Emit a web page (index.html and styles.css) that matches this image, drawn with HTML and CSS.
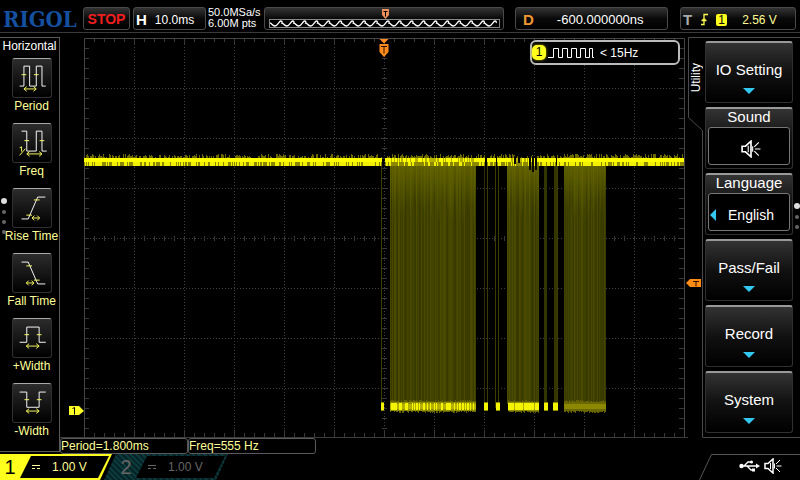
FILE: index.html
```html
<!DOCTYPE html>
<html lang="en">
<head>
    <meta charset="UTF-8">
    <meta name="viewport" content="width=device-width, initial-scale=1.0">
    <title>RIGOL Oscilloscope</title>
    <link rel="stylesheet" href="styles.css">
</head>
<body>
    <!-- Shared icons -->
    <svg class="defs" width="0" height="0" aria-hidden="true">
        <symbol id="icon-speaker" viewBox="0 0 18 16">
            <path d="M1 5.500h3l5-4.500v14l-5-4.500h-3z" fill="none" stroke="#fff" stroke-width="1.500"/>
            <path d="M6.500 5v6" fill="none" stroke="#fff"/>
            <path d="M10.500 5.500v5M12 6l4-4M12.500 8h5M12 10l4 4" fill="none" stroke="#fff"/>
        </symbol>
    </svg>

    <div class="scope">
        <header class="topbar">
            <div class="logo">RIGOL</div>
            <button class="box stop">STOP</button>
            <div class="box timebase"><b>H</b><span>10.0ms</span></div>
            <div class="sampling">50.0MSa/s<br>6.00M pts</div>
            <div class="box memory">
                <svg viewBox="0 0 240 21" preserveAspectRatio="none">
                    <rect x="4.500" y="11.500" width="232" height="8" fill="#000" stroke="#888"/>
                    <path id="memory-wave" fill="none" stroke="#fff" stroke-width="1.300"/>
                    <path d="M118 1h7v6l-3.500 4-3.500-4z" fill="#f0915a"/>
                    <path d="M119.500 3.500h4M121.500 3.500v5" stroke="#000"/>
                </svg>
            </div>
            <div class="box delay"><b>D</b><span>-600.000000ns</span></div>
            <div class="box trigger">
                <b>T</b>
                <svg width="9" height="13" viewBox="0 0 9 13">
                    <path d="M1 11.500h3v-10h4M1.500 7.500h5M2.500 6.500h3" fill="none" stroke="#ffff50" stroke-width="1.300"/>
                </svg>
                <span class="source">1</span>
                <span class="level">2.56 V</span>
            </div>
        </header>

        <main class="screen">
            <nav class="measures">
                <h2>Horizontal</h2>
                <button class="measure">
                    <svg viewBox="0 0 40 40">
                        <path class="w" d="M7 28.500h4.500v-21h6v21h7v-21h6v21h4"/>
                        <path class="y" d="M9 16.500h5M22 16.500h5M12 31.500h12M14.500 29l-3 2.500 3 2.500M21.500 29l3 2.500-3 2.500"/>
                    </svg>
                    Period
                </button>
                <button class="measure">
                    <svg viewBox="0 0 40 40">
                        <path class="w" d="M9 7.500h5.500v21h10v-21h6v21h5"/>
                        <path class="y" d="M12 17.500h5M28 17.500h5M15 31.500h15M17.500 29l-3 2.500 3 2.500M27.500 29l3 2.500-3 2.500M7 25l2-1v5M7 33l6-7"/>
                    </svg>
                    Freq
                </button>
                <button class="measure">
                    <svg viewBox="0 0 40 40">
                        <path class="w" d="M9 31.500h7l10-23h8"/>
                        <path class="y" d="M14 27.500h6M22 11.500h6M20 30.500h8M22.500 28l-2.500 2.500 2.500 2.500M25.500 28l2.500 2.500-2.500 2.500"/>
                    </svg>
                    Rise Time
                </button>
                <button class="measure">
                    <svg viewBox="0 0 40 40">
                        <path class="w" d="M9 8.500h7l10 23h8"/>
                        <path class="y" d="M14 12.500h6M22 27.500h6M14 30.500h8M16.500 28l-2.500 2.500 2.500 2.500M19.500 28l2.500 2.500-2.500 2.500"/>
                    </svg>
                    Fall Time
                </button>
                <button class="measure">
                    <svg viewBox="0 0 40 40">
                        <path class="w" d="M7 24.500h7.500v-16h13v16h7"/>
                        <path class="y" d="M12 16.500h5M25 16.500h5M14 28.500h13M17 26l-3 2.500 3 2.500M24.500 26l3 2.500-3 2.500"/>
                    </svg>
                    +Width
                </button>
                <button class="measure">
                    <svg viewBox="0 0 40 40">
                        <path class="w" d="M7 8.500h7.500v16h13v-16h7"/>
                        <path class="y" d="M12 16.500h5M25 16.500h5M14 28.500h13M17 26l-3 2.500 3 2.500M24.500 26l3 2.500-3 2.500"/>
                    </svg>
                    -Width
                </button>
                <div class="dots dots-left"><i></i><i></i><i></i><i></i></div>
            </nav>

            <section class="display">
                <svg class="plot" viewBox="60 37 628 401">
                    <defs>
                        <linearGradient id="glow" x1="0" y1="0" x2="0" y2="1">
                            <stop offset="0" stop-color="#808000" stop-opacity=".5"/>
                            <stop offset="1" stop-color="#808000" stop-opacity="0"/>
                        </linearGradient>
                    </defs>
                    <g id="grid"></g>
                    <g id="trace" shape-rendering="crispEdges"></g>
                    <!-- trigger position -->
                    <path d="M379.500 39h9l-4.500 4.500zM379.500 44h9v8l-4.500 5-4.500-5z" fill="#ff8c1e"/>
                    <path d="M381 46.500h6M384 46.500v7" stroke="#301000"/>
                    <!-- channel 1 ground -->
                    <path d="M69 406h10l5 5-5 4h-10z" fill="#ffff28"/>
                    <path d="M72.500 408.500l2-1v7" fill="none" stroke="#000"/>
                </svg>
                <div class="counter">
                    <b>1</b>
                    <svg width="46" height="12" viewBox="0 0 46 12">
                        <path d="M0 10.500h5.500v-9h5v9h4v-9h5v9h4v-9h5v9h4v-9h5v9h4v-9h3v9h1.500" fill="none" stroke="#fff"/>
                    </svg>
                    <span>&lt; 15Hz</span>
                </div>
                <div class="results">
                    <div>Period=1.800ms</div>
                    <div>Freq=555 Hz</div>
                </div>
            </section>

            <aside class="side">
                <div class="tab">
                    <svg width="15" height="401" viewBox="0 0 15 401">
                        <path d="M15 .5H.5v80l14 13v307" fill="none" stroke="#4a4a4a"/>
                        <path d="M-2 246l4-4h11v8h-11z" fill="#ff8c14"/>
                        <path d="M5 244.500h6M8 244.500v5" stroke="#301000"/>
                    </svg>
                    <span>Utility</span>
                </div>
                <div class="menu">
                    <button class="item">IO Setting<i class="down"></i></button>
                    <button class="item choice">Sound
                        <span><svg width="20" height="18"><use href="#icon-speaker"/></svg></span>
                    </button>
                    <button class="item choice">Language
                        <span><i class="left"></i>English</span>
                    </button>
                    <button class="item">Pass/Fail<i class="down"></i></button>
                    <button class="item">Record<i class="down"></i></button>
                    <button class="item">System<i class="down"></i></button>
                    <div class="dots dots-right"><i></i><i></i><i></i></div>
                </div>
            </aside>
        </main>

        <footer class="bottombar">
            <button class="channel ch1">
                <b>1</b>
                <span><i class="dc"></i>1.00 V</span>
            </button>
            <button class="channel ch2">
                <b>2</b>
                <span><i class="dc"></i>1.00 V</span>
            </button>
            <div class="status">
                <svg class="edge" width="14" height="26" viewBox="0 0 14 26">
                    <path d="M.5 26l12-25.500h2" fill="none" stroke="#555"/>
                </svg>
                <div class="status-icons">
                    <svg width="21" height="12" viewBox="0 0 21 12">
                        <path d="M2 6h16M5 6l4-4h3M8 6l4 4h3" fill="none" stroke="#fff" stroke-width="1.300"/>
                        <circle cx="2.500" cy="6" r="2.200" fill="#fff"/>
                        <circle cx="12.500" cy="2" r="1.500" fill="#fff"/>
                        <path d="M17 3.500l4 2.500-4 2.500zM13 8.500h3v3h-3z" fill="#fff"/>
                    </svg>
                    <svg width="18" height="16"><use href="#icon-speaker"/></svg>
                </div>
            </div>
        </footer>
    </div>

    <script src="scope.js"></script>
</body>
</html>
```
FILE: styles.css
```css
* {
    box-sizing: border-box;
}

body {
    margin: 0;
    background: #000;
    color: #fff;
    font-family: "Liberation Sans", Arial, sans-serif;
    font-size: 12px;
}

button {
    margin: 0;
    padding: 0;
    border: none;
    background: none;
    color: inherit;
    font: inherit;
    cursor: pointer;
}

svg {
    display: block;
}

.defs {
    position: absolute;
}

.scope {
    display: flex;
    flex-direction: column;
    min-height: 100vh;
    overflow: hidden;
}

/* Top bar */
.topbar {
    display: flex;
    align-items: flex-start;
    height: 33px;
    padding: 7px 4px 0 3px;
    border-bottom: 1px solid #3a3a3a;
}

.logo {
    width: 80px;
    color: #1550a0;
    font-family: "DejaVu Serif Condensed", "DejaVu Serif", serif;
    font-size: 22px;
    font-weight: bold;
    line-height: 24px;
}

.box {
    display: flex;
    align-items: center;
    height: 23px;
    border: 1px solid #4a4a4a;
    border-radius: 3px;
    background: linear-gradient(#333, #0a0a0a 50%, #000);
}

.box b {
    font-size: 15px;
}

.stop {
    justify-content: center;
    width: 47px;
    color: #f01e1e;
    font-size: 14px;
    font-weight: bold;
}

.timebase,
.delay,
.trigger {
    padding-top: 2px;
}

.timebase {
    width: 73px;
    margin-left: 3px;
    padding-left: 2px;
    gap: 8px;
}

.sampling {
    width: 56px;
    margin-left: 2px;
    font-size: 11px;
    line-height: 11px;
    white-space: nowrap;
}

.memory {
    flex: 1;
}

.memory svg {
    width: 100%;
    height: 21px;
}

.delay {
    width: 153px;
    margin-left: 11px;
    padding-left: 7px;
    gap: 23px;
    font-size: 13px;
}

.delay b {
    color: #f09632;
}

.trigger {
    width: 116px;
    margin-left: 12px;
    padding-left: 2px;
    color: #ffff96;
}

.trigger b {
    color: #aaa;
    margin-right: 8px;
}

.source {
    width: 11px;
    margin-left: 7px;
    border-radius: 2px;
    background: #ffff1e;
    color: #000;
    line-height: 12px;
    text-align: center;
}

.level {
    margin-left: 15px;
}

/* Main screen */
.screen {
    display: grid;
    grid-template-columns: 60px 1fr 112px;
    align-items: start;
    padding-top: 4px;
}

.measures {
    position: relative;
    display: flex;
    flex-direction: column;
    align-items: center;
    gap: 9px;
    padding: 0 0 12px;
    border: solid #5a5a5a;
    border-width: 1px 1px 1px 0;
}

.measures h2 {
    margin: 0 0 -5px;
    font-size: 12px;
    font-weight: normal;
    line-height: 16px;
}

.measure {
    display: flex;
    flex-direction: column;
    align-items: center;
    padding-left: 4px;
    color: #ffff96;
    line-height: 16px;
    white-space: nowrap;
}

.measure svg {
    width: 40px;
    height: 40px;
    border: 1px solid #303030;
    border-top-color: #aaa;
    border-radius: 3px;
    background: linear-gradient(#2c2c2c, #000);
}

.measure path {
    fill: none;
}

.w {
    stroke: #fff;
}

.y {
    stroke: #ffff64;
}

.dots {
    position: absolute;
    display: flex;
    flex-direction: column;
    align-items: center;
    gap: 6px;
}

.dots i {
    width: 4px;
    height: 4px;
    border-radius: 50%;
    background: #666;
}

.dots i:first-child {
    width: 6px;
    height: 6px;
    background: #ddd;
}

.dots-left {
    left: 1px;
    top: 160px;
}

.dots-right {
    right: 0;
    top: 165px;
}

.display {
    position: relative;
}

.plot {
    width: 100%;
}

.counter {
    position: absolute;
    top: 3px;
    right: 8px;
    display: flex;
    align-items: center;
    width: 150px;
    height: 25px;
    border: 2px solid #bbb;
    border-radius: 6px;
    background: #000;
}

.counter b {
    width: 14px;
    border-radius: 5px;
    background: #ffff1e;
    box-shadow: 0 0 3px #aaaa00;
    color: #000;
    font-weight: normal;
    line-height: 15px;
    text-align: center;
}

.counter svg {
    margin-left: 2px;
}

.counter span {
    margin-left: 6px;
}

.results {
    display: flex;
    color: #ffff96;
}

.results div {
    width: 128px;
    border: 1px solid #5a5a5a;
    border-radius: 3px;
    line-height: 14px;
}

/* Utility menu */
.side {
    display: flex;
}

.tab {
    position: relative;
    width: 15px;
}

.tab svg {
    overflow: visible;
}

.tab span {
    position: absolute;
    top: 26px;
    left: 1px;
    line-height: 15px;
    writing-mode: vertical-rl;
    transform: rotate(180deg);
}

.menu {
    position: relative;
    flex: 1;
    display: flex;
    flex-direction: column;
    gap: 4px;
    padding: 3px 7px 4px 2px;
    border: solid #4a4a4a;
    border-width: 1px 0;
}

.item {
    display: flex;
    flex-direction: column;
    align-items: center;
    height: 62px;
    padding-top: 18px;
    border: 1px solid #303030;
    border-top: 2px solid #999;
    border-radius: 3px;
    background: linear-gradient(#333, #111 50%, #000);
    font-size: 15px;
    line-height: 18px;
}

.down {
    margin-top: 9px;
    border: solid transparent;
    border-width: 6px 6px 0;
    border-top-color: #32c8f0;
}

.choice {
    padding: 0 2px 3px;
    line-height: 16px;
}

.choice > span {
    position: relative;
    display: flex;
    flex: 1;
    align-items: center;
    justify-content: center;
    width: 100%;
    margin-top: 2px;
    padding: 5px 0 0 4px;
    border: 1px solid #777;
    border-radius: 3px;
    background: #000;
    font-size: 14px;
}

.left {
    position: absolute;
    left: 1px;
    border: solid transparent;
    border-width: 6px 6px 6px 0;
    border-right-color: #32c8f0;
}

/* Channels and status */
.bottombar {
    display: flex;
    flex: 1;
    min-height: 26px;
}

.channel {
    display: flex;
    align-items: stretch;
    width: 112px;
    padding: 2px 3px 2px 0;
    clip-path: polygon(0 0, 100% 0, calc(100% - 12px) 100%, 0 100%);
}

.channel b {
    width: 20px;
    font-size: 20px;
    font-weight: normal;
    line-height: 22px;
    text-align: center;
}

.channel span {
    display: flex;
    flex: 1;
    align-items: center;
    gap: 12px;
    padding-left: 12px;
    background: #000;
    clip-path: polygon(11px 0, 100% 0, calc(100% - 11px) 100%, 0 100%);
}

.ch1 {
    background: #ffff1e;
    color: #ffff96;
}

.ch1 b {
    color: #000;
}

.ch2 {
    width: 124px;
    margin-left: -8px;
    padding-left: 12px;
    background: repeating-linear-gradient(45deg, #0c3a3c 0 2px, #062426 2px 4px);
    color: #666;
    clip-path: polygon(12px 0, 100% 0, calc(100% - 12px) 100%, 0 100%);
}

.dc {
    width: 8px;
    height: 4px;
    border-top: 1px solid;
    border-bottom: 1px dashed;
}

.status {
    display: flex;
    width: 101px;
    margin-left: auto;
}

.status-icons {
    display: flex;
    flex: 1;
    align-items: center;
    gap: 4px;
    padding: 0 0 4px 26px;
    border-top: 1px solid #555;
}
```
FILE: scope.js
```javascript
const NS = 'http://www.w3.org/2000/svg';
const grid = document.getElementById('grid');
const trace = document.getElementById('trace');

function path(parent, d, stroke, dash) {
    const el = document.createElementNS(NS, 'path');
    el.setAttribute('d', d);
    el.setAttribute('stroke', stroke);
    el.setAttribute('fill', 'none');
    if (dash) el.setAttribute('stroke-dasharray', dash);
    parent.appendChild(el);
}

function rect(x, y, w, h, fill) {
    const el = document.createElementNS(NS, 'rect');
    el.setAttribute('x', x);
    el.setAttribute('y', y);
    el.setAttribute('width', w);
    el.setAttribute('height', h);
    el.setAttribute('fill', fill);
    trace.appendChild(el);
}

// Repeatable noise, so the trace is the same on every load
let seed = 7;
function noise() {
    seed = (seed * 16807) % 2147483647;
    return seed / 2147483647;
}

// Graticule: 12 x 8 divisions of 50
for (let x = 134; x < 684; x += 50) path(grid, `M${x + 0.5} 38V437`, '#404040', '1 2');
for (let y = 88; y < 437; y += 50) path(grid, `M84 ${y + 0.5}H684`, '#404040', '1 2');
let ticks = '';
for (let x = 94; x < 684; x += 10) {
    const n = (x - 84) % 50 ? 4 : 7;
    ticks += `M${x + 0.5} 38v${n}M${x + 0.5} 437v-${n}M${x + 0.5} 236v5`;
}
for (let y = 48; y < 437; y += 10) {
    ticks += `M84 ${y + 0.5}h5M684 ${y + 0.5}h-5M382 ${y + 0.5}h5`;
}
path(grid, ticks, '#383838');
path(grid, 'M84.5 38.5H684.5V437.5H84.5Z', '#444');
path(grid, 'M60 437.5H688', '#3c3c3c');

// Bursts: fast edges blur into a dim fill between the two levels
const bursts = [[390, 476], [507, 539], [564, 606]];
const dim = ['#444600', '#383a00', '#404200', '#4a4a00', '#3c3e00'];
for (const [from, to] of bursts) {
    for (let x = from; x < to; x++) {
        rect(x, 164, 1, 240, dim[Math.floor(noise() * dim.length)]);
        rect(x, 165, 1, 30 + noise() * 30, 'url(#glow)');
    }
}
for (const x of [381, 487, 495, 498, 554, 557]) rect(x, 160, 1, 248, '#3c3c00');
for (const x of [484, 545]) rect(x, 160, 1, 248, '#2c2c00');
rect(544, 165, 3, 240, '#343600');
rect(554, 165, 3, 240, '#343600');

// High level
const inBurst = x => bursts.some(([from, to]) => x >= from && x < to);
for (let x = 84; x < 684; x++) {
    if ([382, 383, 384, 485, 486, 496, 556].includes(x)) continue;
    if (noise() > 0.4) rect(x, 154 + noise() * 3, 1, 5, '#6c6800');
    const dull = x > 390 && x < 476 || x > 509 && x < 528;
    rect(x, 158, 1, 5, dull && noise() > 0.5 ? '#b4b400' : '#ffff00');
    rect(x, 162, 1, 4, noise() > (dull ? 0.7 : 0.4) ? '#f0f000' : '#8c8800');
}
for (const [x, h] of [[514, 8], [518, 7], [529, 14], [532, 16], [535, 14]]) rect(x, 156, 2, h, '#080800');

// Low level
for (const [from, to, level] of [[381, 384, 1], [390, 476, 0.5], [484, 488, 1], [496, 500, 1], [508, 539, 0.9], [544, 548, 1], [553, 558, 1], [564, 606, 0]]) {
    for (let x = from; x < to; x++) {
        const bright = noise() < level;
        if (inBurst(x)) rect(x, 400 + noise() * 2, 1, 11, '#646200');
        rect(x, 402, 1, 9, level ? '#908c00' : '#6c6800');
        if (bright) rect(x, 403, 1, 7, '#f4f400');
        else rect(x, 404, 1, 5, level ? '#b4b000' : '#8c8800');
    }
}

// Whole-memory preview in the top bar
let wave = 'M5 15';
for (let x = 5; x < 235; x += 12) wave += 'c2 0 2 3 5 3s4-5 6-5s1 2 1 2';
document.getElementById('memory-wave').setAttribute('d', wave.slice(0, wave.lastIndexOf('c')));
```
